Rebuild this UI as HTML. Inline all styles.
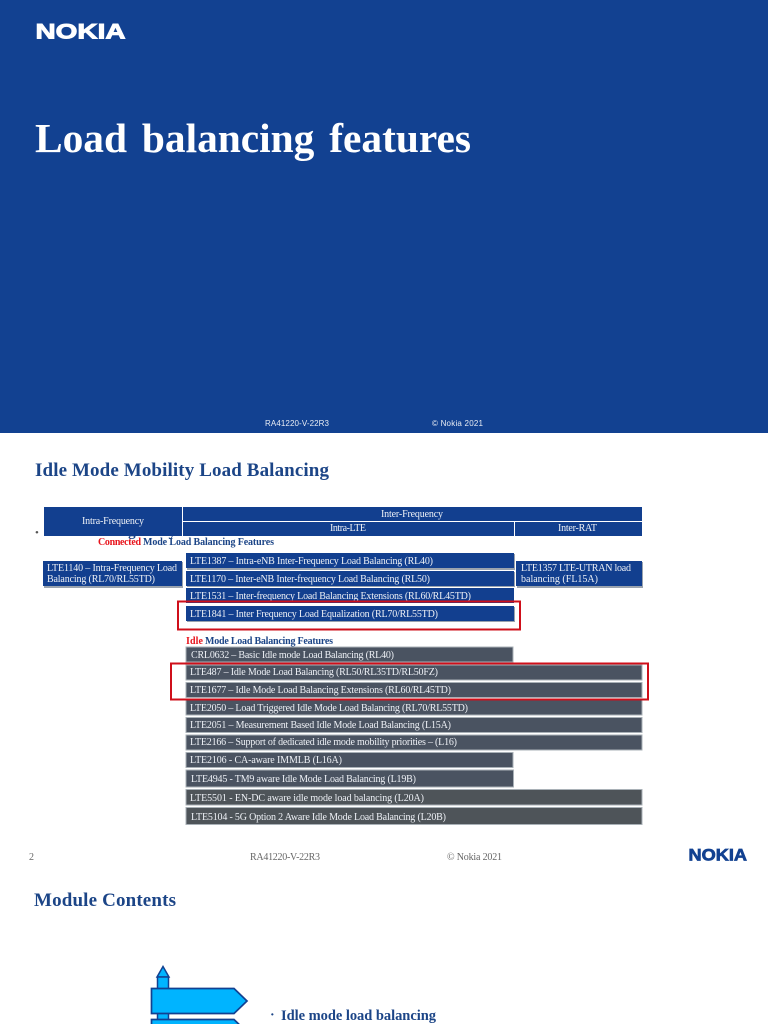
<!DOCTYPE html>
<html lang="en">
<head>
<meta charset="utf-8">
<title>Load balancing features</title>
<style>
html,body{margin:0;padding:0;background:#fff;width:768px;height:1024px;overflow:hidden}
svg{display:block;filter:blur(.3px)}
text{font-family:"Liberation Serif",serif}
.w{fill:#eef1f6;font-size:10px}
.h{font-weight:bold;fill:#1c4587}
.f{fill:#666;font-size:10px}
.s{font-family:"Liberation Sans",sans-serif;fill:#e8ecf4;font-size:8px}
.b{fill:#123f8f}
.g{fill:#4a5361;stroke:#a9b1b7;stroke-width:1}
.g2{fill:#4e5459;stroke:#a9b1b7;stroke-width:1}
.sh{fill:#9aa3ae}
.logo{font-family:"Liberation Sans",sans-serif;font-weight:bold}
</style>
</head>
<body>
<svg width="768" height="1024" viewBox="0 0 768 1024" xmlns="http://www.w3.org/2000/svg">
<rect width="768" height="433" fill="#124191"/>
<text class="logo" x="35.500" y="38.500" fill="#fff" stroke="#fff" stroke-width=".9" style="font-size:21px" textLength="90" lengthAdjust="spacingAndGlyphs">NOKIA</text>
<text x="35" y="152" fill="#fff" font-size="41.400" font-weight="bold" word-spacing="4.500">Load balancing features</text>
<text class="s" x="265" y="426" textLength="64" lengthAdjust="spacing">RA41220-V-22R3</text>
<text class="s" x="432" y="426" textLength="51" lengthAdjust="spacing">© Nokia 2021</text>

<text class="h" x="35" y="476" font-size="19" textLength="294" lengthAdjust="spacing">Idle Mode Mobility Load Balancing</text>

<text x="35" y="536" font-size="11" fill="#555">•</text>
<text class="h" x="50" y="536" font-size="15" fill="#1c4587" textLength="126" lengthAdjust="spacing">Load Balancing Family</text>

<rect x="44" y="507" width="598" height="29" class="b"/>
<rect x="182" y="507" width="1" height="29" fill="#fff"/>
<rect x="183" y="521" width="459" height="1" fill="#fff"/>
<rect x="514" y="522" width="1" height="14" fill="#fff"/>
<text class="w" x="82" y="524" textLength="62" lengthAdjust="spacing">Intra-Frequency</text>
<text class="w" x="381" y="517" textLength="62" lengthAdjust="spacing">Inter-Frequency</text>
<text class="w" x="330" y="531" textLength="36" lengthAdjust="spacing">Intra-LTE</text>
<text class="w" x="558" y="531" textLength="39" lengthAdjust="spacing">Inter-RAT</text>

<text x="98" y="545" font-size="10" font-weight="bold" fill="#e8141c" textLength="43" lengthAdjust="spacing">Connected</text>
<text class="h" x="143" y="545" font-size="10" fill="#1c3f75" textLength="131" lengthAdjust="spacing">Mode  Load Balancing Features</text>

<rect x="44" y="562" width="139" height="26" class="sh"/>
<rect x="43" y="561" width="139" height="25" class="b"/>
<text class="w" x="47" y="571" textLength="130" lengthAdjust="spacing">LTE1140 – Intra-Frequency Load</text>
<text class="w" x="47" y="582" textLength="108" lengthAdjust="spacing">Balancing (RL70/RL55TD)</text>

<rect x="517" y="562" width="126" height="26" class="sh"/>
<rect x="516" y="561" width="126" height="25" class="b"/>
<text class="w" x="521" y="571" textLength="110" lengthAdjust="spacing">LTE1357 LTE-UTRAN load</text>
<text class="w" x="521" y="582" textLength="77" lengthAdjust="spacing">balancing  (FL15A)</text>

<rect x="187" y="554" width="328" height="16" class="sh"/>
<rect x="186" y="553" width="328" height="15" class="b"/>
<text class="w" x="190" y="564" textLength="243" lengthAdjust="spacing">LTE1387 – Intra-eNB Inter-Frequency Load Balancing (RL40)</text>
<rect x="187" y="572" width="328" height="15" class="sh"/>
<rect x="186" y="571" width="328" height="15" class="b"/>
<text class="w" x="190" y="582" textLength="240" lengthAdjust="spacing">LTE1170 – Inter-eNB Inter-frequency Load Balancing (RL50)</text>
<rect x="186" y="588" width="328" height="15" class="b"/>
<text class="w" x="190" y="599" textLength="281" lengthAdjust="spacing">LTE1531 – Inter-frequency Load Balancing Extensions (RL60/RL45TD)</text>
<rect x="187" y="607" width="328" height="15" class="sh"/>
<rect x="186" y="606" width="328" height="15" class="b"/>
<text class="w" x="190" y="617" textLength="248" lengthAdjust="spacing">LTE1841 – Inter Frequency Load Equalization (RL70/RL55TD)</text>
<rect x="178" y="601.500" width="342" height="28" fill="none" stroke="#cf0f1a" stroke-width="2"/>

<text x="186" y="644" font-size="10" font-weight="bold" fill="#e8141c" textLength="17" lengthAdjust="spacing">Idle</text>
<text class="h" x="205" y="644" font-size="10" fill="#3c4656" textLength="128" lengthAdjust="spacing">Mode Load Balancing Features</text>

<rect x="186" y="647" width="327" height="15" class="g"/>
<text class="w" x="191" y="658" textLength="203" lengthAdjust="spacing">CRL0632 – Basic Idle mode Load Balancing (RL40)</text>
<rect x="186" y="665" width="456" height="15" class="g"/>
<text class="w" x="190" y="675" textLength="248" lengthAdjust="spacing">LTE487 – Idle Mode Load Balancing (RL50/RL35TD/RL50FZ)</text>
<rect x="186" y="682.500" width="456" height="15" class="g"/>
<text class="w" x="190" y="693" textLength="261" lengthAdjust="spacing">LTE1677 – Idle Mode Load Balancing Extensions (RL60/RL45TD)</text>
<rect x="186" y="700" width="456" height="15" class="g"/>
<text class="w" x="190" y="711" textLength="278" lengthAdjust="spacing">LTE2050 – Load Triggered Idle Mode Load Balancing (RL70/RL55TD)</text>
<rect x="186" y="717.500" width="456" height="15" class="g"/>
<text class="w" x="190" y="728" textLength="261" lengthAdjust="spacing">LTE2051 – Measurement Based Idle Mode Load Balancing (L15A)</text>
<rect x="186" y="735" width="456" height="15" class="g"/>
<text class="w" x="190" y="745" textLength="267" lengthAdjust="spacing">LTE2166 – Support of dedicated idle mode mobility priorities – (L16)</text>
<rect x="186" y="752.500" width="327" height="15" class="g"/>
<text class="w" x="190" y="763" textLength="152" lengthAdjust="spacing">LTE2106 -  CA-aware IMMLB (L16A)</text>
<rect x="186" y="770" width="327.500" height="17" class="g"/>
<text class="w" x="191" y="782" textLength="225" lengthAdjust="spacing">LTE4945 - TM9 aware Idle Mode Load Balancing (L19B)</text>
<rect x="186" y="789.500" width="456" height="15.500" class="g2"/>
<text class="w" x="190" y="801" textLength="234" lengthAdjust="spacing">LTE5501 -  EN-DC aware idle mode load balancing  (L20A)</text>
<rect x="186" y="807.500" width="456" height="17" class="g2"/>
<text class="w" x="191" y="820" textLength="255" lengthAdjust="spacing">LTE5104 - 5G Option 2 Aware Idle Mode Load Balancing (L20B)</text>
<rect x="171" y="663.500" width="477" height="36" fill="none" stroke="#cf0f1a" stroke-width="2"/>

<text class="f" x="29" y="860">2</text>
<text class="f" x="250" y="860" textLength="70" lengthAdjust="spacing">RA41220-V-22R3</text>
<text class="f" x="447" y="860" textLength="55" lengthAdjust="spacing">© Nokia 2021</text>
<text class="logo" x="688.500" y="860.500" fill="#124191" stroke="#124191" stroke-width=".7" style="font-size:16.500px" textLength="58.500" lengthAdjust="spacingAndGlyphs">NOKIA</text>

<text class="h" x="34" y="906" font-size="19" textLength="142" lengthAdjust="spacing">Module Contents</text>

<path d="M163 966.500L169 977H157Z" fill="#00b4ff" stroke="#124191" stroke-width="1.500"/>
<rect x="157.500" y="977" width="11" height="47" fill="#00b4ff" stroke="#124191" stroke-width="1.500"/>
<path d="M151.500 988.500H234L247 1001L234 1013.500H151.500Z" fill="#00b4ff" stroke="#124191" stroke-width="1.700"/>
<path d="M151.500 1019.500H234L247 1032L234 1045H151.500Z" fill="#00b4ff" stroke="#124191" stroke-width="1.700"/>

<text x="270" y="1019" font-size="14" font-weight="bold" fill="#1c4587">·</text>
<text class="h" x="281" y="1020" font-size="14.500" textLength="155" lengthAdjust="spacing">Idle mode load balancing</text>
</svg>
</body>
</html>
